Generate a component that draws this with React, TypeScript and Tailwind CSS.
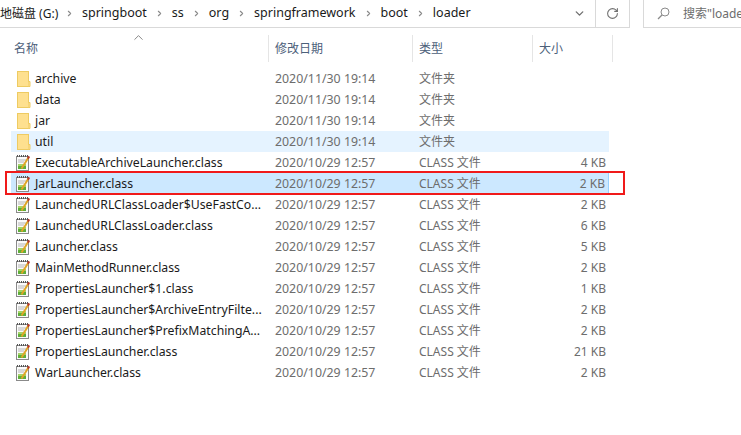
import React from 'react';
import { ChevronRight, ChevronDown, ChevronUp, RotateCw } from 'lucide-react';

type Row = { name: string; date: string; type: string; size?: string; state?: 'hover' | 'selected' };

const ROWS: Row[] = [
  { name: 'archive', date: '2020/11/30 19:14', type: '文件夹' },
  { name: 'data', date: '2020/11/30 19:14', type: '文件夹' },
  { name: 'jar', date: '2020/11/30 19:14', type: '文件夹' },
  { name: 'util', date: '2020/11/30 19:14', type: '文件夹', state: 'hover' },
  { name: 'ExecutableArchiveLauncher.class', date: '2020/10/29 12:57', type: 'CLASS 文件', size: '4 KB' },
  { name: 'JarLauncher.class', date: '2020/10/29 12:57', type: 'CLASS 文件', size: '2 KB', state: 'selected' },
  { name: 'LaunchedURLClassLoader$UseFastCo...', date: '2020/10/29 12:57', type: 'CLASS 文件', size: '2 KB' },
  { name: 'LaunchedURLClassLoader.class', date: '2020/10/29 12:57', type: 'CLASS 文件', size: '6 KB' },
  { name: 'Launcher.class', date: '2020/10/29 12:57', type: 'CLASS 文件', size: '5 KB' },
  { name: 'MainMethodRunner.class', date: '2020/10/29 12:57', type: 'CLASS 文件', size: '2 KB' },
  { name: 'PropertiesLauncher$1.class', date: '2020/10/29 12:57', type: 'CLASS 文件', size: '1 KB' },
  { name: 'PropertiesLauncher$ArchiveEntryFilte...', date: '2020/10/29 12:57', type: 'CLASS 文件', size: '2 KB' },
  { name: 'PropertiesLauncher$PrefixMatchingA...', date: '2020/10/29 12:57', type: 'CLASS 文件', size: '2 KB' },
  { name: 'PropertiesLauncher.class', date: '2020/10/29 12:57', type: 'CLASS 文件', size: '21 KB' },
  { name: 'WarLauncher.class', date: '2020/10/29 12:57', type: 'CLASS 文件', size: '2 KB' },
];

const CRUMBS = ['springboot', 'ss', 'org', 'springframework', 'boot', 'loader'];

const FolderIcon = () => (
  <svg width="16" height="18" viewBox="0 0 16 18" className="shrink-0">
    <rect x="2.5" y="1.5" width="11" height="15" fill="#fee08f" stroke="#eecb62" />
    <path d="M13.5 11.5h1.5v5h-1.5" fill="#fee08f" stroke="#eecb62" />
  </svg>
);

const ClassIcon = () => (
  <svg width="16" height="18" viewBox="0 0 16 18" className="shrink-0">
    <rect x="1.5" y="2.5" width="12" height="14" fill="#fbfbfb" stroke="#8a8a8a" />
    <path d="M2 2h11" stroke="#555" strokeDasharray="1 1" strokeWidth="2" />
    <path d="M3 6h9M3 8h6" stroke="#b5b5b5" />
    <rect x="3" y="10" width="8" height="5" fill="#5fae3a" />
    <rect x="3" y="10" width="8" height="2" fill="#a5d468" />
    <path d="M6.5 14.5 13.5 3.5" stroke="#e0a526" strokeWidth="2" />
    <path d="M12.8 4.6 14.2 2.4" stroke="#b5392a" strokeWidth="2" />
  </svg>
);

const SearchIcon = () => (
  <svg width="13" height="13" viewBox="0 0 13 13" fill="none" stroke="#8a8a8a" className="shrink-0">
    <circle cx="8" cy="5" r="4" />
    <path d="M5 8 1 12" strokeWidth="1.3" />
  </svg>
);

const HeaderCell = ({ label, className }: { label: string; className: string }) => (
  <div className={`h-[27px] flex items-center border-r border-[#e5e5e5] ${className}`}>
    <span>{label}</span>
  </div>
);

export default function App() {
  return (
    <div
      className="w-[741px] h-[435px] bg-white overflow-hidden text-[12px]"
      style={{ fontFamily: '"Noto Sans", "Noto Sans CJK SC", sans-serif' }}
    >
      {/* address bar + search */}
      <div className="h-[28px] flex">
        <div className="w-[630px] shrink-0 flex items-center border-b border-r border-[#d9d9d9] overflow-hidden">
          <div className="flex-1 min-w-0 flex items-center text-[12.5px] text-[#1a1a1a] whitespace-nowrap">
            <span className="ml-[-12px] w-[69px] shrink-0 text-[12px]">本地磁盘 (G:)</span>
            {CRUMBS.map(crumb => (
              <React.Fragment key={crumb}>
                <ChevronRight className="w-[9px] h-[9px] mx-[8px] text-[#8a8a8a]" strokeWidth={3} />
                <span>{crumb}</span>
              </React.Fragment>
            ))}
          </div>
          <div className="w-[32px] pl-[1px] flex justify-center">
            <ChevronDown className="w-[13px] h-[13px] text-[#707070]" strokeWidth={2.5} />
          </div>
          <div className="w-[34px] h-full flex items-center justify-center border-l border-[#d9d9d9]">
            <RotateCw className="w-[13px] h-[13px] text-[#707070]" strokeWidth={2} />
          </div>
        </div>
        <div className="ml-[13px] flex-1 flex items-center border-l border-b border-[#d9d9d9] text-[#6d6d6d] whitespace-nowrap overflow-hidden">
          <div className="ml-[13px]">
            <SearchIcon />
          </div>
          <span className="ml-[13px]">搜索"loader"</span>
        </div>
      </div>

      {/* column headers */}
      <div className="relative mt-[7px] flex text-[#4c607a]">
        <ChevronUp className="absolute left-[131px] top-[-5px] w-[15px] h-[15px] text-[#777777]" strokeWidth={1.4} />
        <HeaderCell label="名称" className="w-[269px] pl-[14px]" />
        <HeaderCell label="修改日期" className="w-[144px] pl-[6px]" />
        <HeaderCell label="类型" className="w-[120px] pl-[6px]" />
        <HeaderCell label="大小" className="w-[80px] pl-[6px]" />
      </div>

      {/* file rows */}
      <div className="mt-[6px] ml-[11px] w-[598px] flex flex-col">
        {ROWS.map(row => {
          const isFolder = row.type === '文件夹';
          const selected = row.state === 'selected';
          return (
            <div key={row.name} className="relative h-[21px]">
              <div
                className={`h-full flex items-center whitespace-nowrap text-[#6d6d6d] ${
                  selected
                    ? 'bg-[#cce8ff] border-r border-[#99d1ff]'
                    : row.state === 'hover'
                      ? 'bg-[#e5f3ff]'
                      : ''
                }`}
              >
                <div className="w-[257px] flex items-center pl-[4px]">
                  {isFolder ? <FolderIcon /> : <ClassIcon />}
                  <span className="ml-[4px] pt-[2px] text-[12.25px] text-[#1a1a1a]">{row.name}</span>
                </div>
                <div className="w-[144px] pl-[7px] pt-[2px] text-[12.35px]">{row.date}</div>
                <div className="w-[120px] pl-[7px]">{row.type}</div>
                <div className="flex-1 text-right pr-[3px]">{row.size}</div>
              </div>
              {selected && (
                <div className="absolute left-[-6px] top-[-2px] w-[620px] h-[24px] border-[2px] border-[#f01a1a]" />
              )}
            </div>
          );
        })}
      </div>
    </div>
  );
}
